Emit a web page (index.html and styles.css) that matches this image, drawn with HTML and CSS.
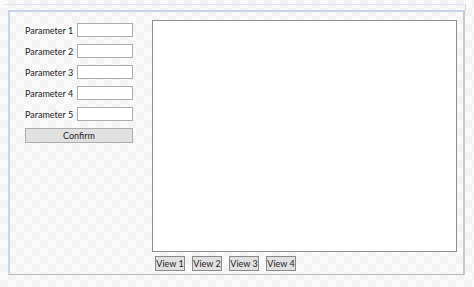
FILE: index.html
```html
<!DOCTYPE html>
<html lang="en">
  <head>
    <meta charset="UTF-8" />
    <meta name="viewport" content="width=device-width, initial-scale=1.0" />
    <title>Designer Preview</title>
    <link rel="stylesheet" href="styles.css">
  </head>
  <body>
    <div class="guide"></div>
    <div class="window">
      <div class="params">
        <div class="row">
          <label for="p1">Parameter 1</label>
          <input type="text" id="p1" />
        </div>
        <div class="row">
          <label for="p2">Parameter 2</label>
          <input type="text" id="p2" />
        </div>
        <div class="row">
          <label for="p3">Parameter 3</label>
          <input type="text" id="p3" />
        </div>
        <div class="row">
          <label for="p4">Parameter 4</label>
          <input type="text" id="p4" />
        </div>
        <div class="row">
          <label for="p5">Parameter 5</label>
          <input type="text" id="p5" />
        </div>
        <button class="confirm">Confirm</button>
      </div>
      <div class="viewer">
        <div class="screen"></div>
        <div class="views">
          <button class="view_btn">View 1</button>
          <button class="view_btn">View 2</button>
          <button class="view_btn">View 3</button>
          <button class="view_btn">View 4</button>
        </div>
      </div>
    </div>
  </body>
</html>
```

FILE: styles.css
```css
* {
  margin: 0;
  padding: 0;
  box-sizing: border-box;
  font-family: Lato, "Noto Sans", sans-serif;
}
body {
  width: 474px;
  height: 287px;
  overflow: hidden;
  background-color: #f9f9f9;
  background-image: conic-gradient(#f3f3f3 25%, #fbfbfb 0 50%, #f3f3f3 0 75%, #fbfbfb 0);
  background-size: 16px 16px;
  padding: 4px 0 0 5px;
}

.guide {
  width: 461px;
  height: 6px;
  border-top: 1px solid #dde5f3;
  border-right: 1px solid #d6d6d6;
}

.window {
  display: flex;
  margin-left: 3px;
  width: 457px;
  height: 265px;
  border-left: 2px solid #c8d5ec;
  border-top: 2px solid #c8d5ec;
  border-right: 2px solid #c9c9c9;
  border-bottom: 1px solid #b9b9b9;
  padding: 8px 0 0 15px;
}

.params {
  display: flex;
  flex-direction: column;
  gap: 7px;
  width: 108px;
  flex-shrink: 0;
  padding-top: 3px;
}

.row {
  display: flex;
  align-items: center;
  height: 14px;
}

label {
  flex: 1;
  font-size: 9px;
  color: #1e1e1e;
  white-space: nowrap;
  overflow: hidden;
}

input {
  width: 56px;
  height: 14px;
  flex-shrink: 0;
  border: 1px solid #acacac;
  background-color: #fff;
}

.confirm {
  height: 15px;
  font-size: 9px;
  line-height: 13px;
  color: #1e1e1e;
  background-color: #e1e1e1;
  border: 1px solid #adadad;
}

.viewer {
  margin-left: 19px;
  display: flex;
  flex-direction: column;
}

.screen {
  width: 305px;
  height: 232px;
  background-color: #fff;
  border: 1px solid #8e8e8e;
}

.views {
  display: flex;
  gap: 7px;
  margin: 4px 0 0 3px;
}

.view_btn {
  width: 30px;
  height: 15px;
  padding: 0;
  font-size: 9px;
  line-height: 13px;
  white-space: nowrap;
  color: #1e1e1e;
  background-color: #e1e1e1;
  border: 1px solid #8a8a8a;
}
```
